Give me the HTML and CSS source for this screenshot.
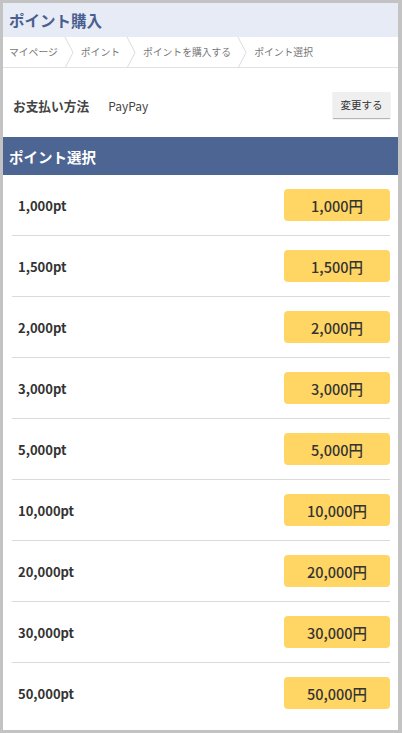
FILE: index.html
```html
<!DOCTYPE html>
<html lang="ja">
<head>
<meta charset="utf-8">
<title>ポイント購入</title>
<link rel="stylesheet" href="styles.css">
</head>
<body>
<div class="frame">
  <header class="page-head"><h1>ポイント購入</h1></header>
  <nav class="crumbs">
    <span class="crumb">マイページ</span>
    <svg class="sep" viewBox="0 0 10 31" width="10" height="31"><polyline points="1,0 9,15.5 1,31" fill="none" stroke="#dcdcdc" stroke-width="1"/></svg>
    <span class="crumb">ポイント</span>
    <svg class="sep" viewBox="0 0 10 31" width="10" height="31"><polyline points="1,0 9,15.5 1,31" fill="none" stroke="#dcdcdc" stroke-width="1"/></svg>
    <span class="crumb">ポイントを購入する</span>
    <svg class="sep" viewBox="0 0 10 31" width="10" height="31"><polyline points="1,0 9,15.5 1,31" fill="none" stroke="#dcdcdc" stroke-width="1"/></svg>
    <span class="crumb">ポイント選択</span>
  </nav>
  <section class="pay">
    <span class="pay-label">お支払い方法</span>
    <span class="pay-value">PayPay</span>
    <button class="pay-change">変更する</button>
  </section>
  <h2 class="section-title">ポイント選択</h2>
  <ul class="plans">
    <li class="plan"><span class="pt">1,000pt</span><button class="price">1,000円</button></li>
    <li class="plan"><span class="pt">1,500pt</span><button class="price">1,500円</button></li>
    <li class="plan"><span class="pt">2,000pt</span><button class="price">2,000円</button></li>
    <li class="plan"><span class="pt">3,000pt</span><button class="price">3,000円</button></li>
    <li class="plan"><span class="pt">5,000pt</span><button class="price">5,000円</button></li>
    <li class="plan"><span class="pt">10,000pt</span><button class="price">10,000円</button></li>
    <li class="plan"><span class="pt">20,000pt</span><button class="price">20,000円</button></li>
    <li class="plan"><span class="pt">30,000pt</span><button class="price">30,000円</button></li>
    <li class="plan"><span class="pt">50,000pt</span><button class="price">50,000円</button></li>
  </ul>
</div>
</body>
</html>
```
FILE: styles.css
```css
html, body {
  margin: 0;
  padding: 0;
  height: 100%;
  overflow: hidden;
}
body {
  background: #c3c3c3;
  font-family: "Noto Sans CJK JP", "Noto Sans", sans-serif;
  color: #333;
}
.frame {
  margin: 3px 4px 3px 3px;
  height: calc(100vh - 6px);
  background: #fff;
  overflow: hidden;
}
.page-head {
  background: #e7ebf6;
  height: 34px;
  display: flex;
  align-items: center;
  padding-left: 6px;
}
.page-head h1 {
  margin: 0;
  font-size: 15.5px;
  font-weight: 700;
  color: #4a5f8f;
  letter-spacing: 0;
}
.crumbs {
  display: flex;
  align-items: center;
  height: 30px;
  border-bottom: 1px solid #e2e2e2;
  padding-left: 6px;
}
.crumb {
  font-size: 9.8px;
  color: #777;
  white-space: nowrap;
}
.sep {
  display: block;
  margin: 0 7px 0 6px;
  flex: none;
}
.pay {
  display: flex;
  align-items: center;
  padding: 24px 8px 19px 10px;
}
.pay-label {
  font-size: 12.7px;
  font-weight: 700;
  color: #444;
}
.pay-value {
  margin-left: 19px;
  font-size: 12px;
  color: #444;
}
.pay-change {
  margin-left: auto;
  width: 57px;
  height: 26px;
  border: none;
  border-radius: 0;
  background: #efefef;
  box-shadow: 0 1px 1px #b5b5b5;
  font-family: inherit;
  font-size: 10.5px;
  color: #333;
  padding: 0 0 2px;
}
.section-title {
  margin: 0;
  height: 38px;
  display: flex;
  align-items: center;
  padding-left: 6px;
  background: #4d6592;
  color: #fff;
  font-size: 14.5px;
  font-weight: 700;
}
.plans {
  list-style: none;
  margin: 0 8px 0 9px;
  padding: 0;
}
.plan {
  display: flex;
  align-items: center;
  justify-content: space-between;
  padding: 14px 0 14px 6px;
  border-bottom: 1px solid #dadada;
}
.plan:last-child {
  border-bottom: none;
}
.pt {
  font-size: 13px;
  font-weight: 700;
  color: #333;
}
.price {
  width: 106px;
  height: 32px;
  border: none;
  border-radius: 4px;
  background: #ffd564;
  font-family: inherit;
  font-size: 14.5px;
  font-weight: 500;
  color: #333;
  padding: 0;
}
```
